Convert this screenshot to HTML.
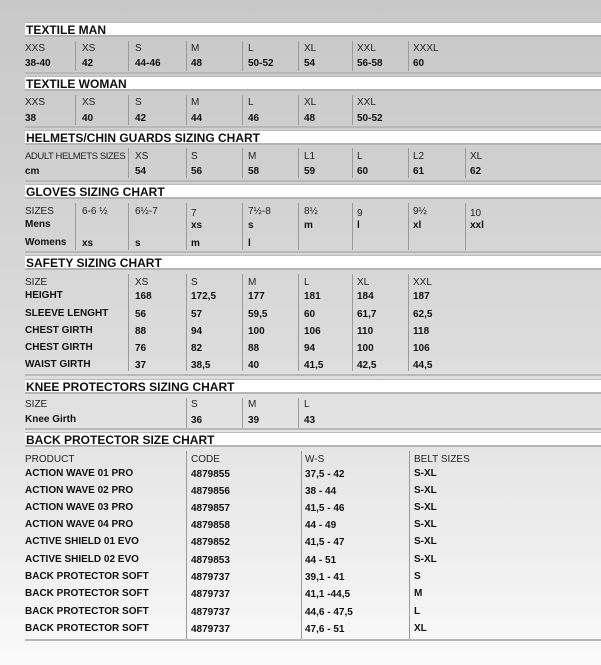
<!DOCTYPE html>
<html><head><meta charset="utf-8"><style>
*{margin:0;padding:0;box-sizing:border-box}
body{width:601px;height:665px;overflow:hidden;position:relative;font-family:"Liberation Sans",sans-serif;color:#1a1a1a;
background:linear-gradient(#c8c8c8 0px,#cfcfcf 150px,#dcdcdc 350px,#eeeeee 550px,#fafafa 665px)}
.h{position:absolute;left:25px;right:0;height:15px;background:#fff;border-top:1px solid #bbb;border-bottom:2px solid #b5b5b5;font-weight:bold;font-size:12px;line-height:14px;padding-left:1px;color:#111}
.t{position:absolute;font-size:10px;line-height:11px;white-space:nowrap;color:#222}
.b{font-weight:bold;color:#111}
.v{position:absolute;width:1px;background:#9a9a9a}
.l{position:absolute;left:25px;right:0;height:2px;background:#b8b8b8}
</style></head><body>

<!-- TEXTILE MAN -->
<div class="h" style="top:22px">TEXTILE MAN</div>
<div class="v" style="left:75px;top:41px;height:30px"></div><div class="v" style="left:128px;top:41px;height:30px"></div><div class="v" style="left:186px;top:41px;height:30px"></div><div class="v" style="left:242px;top:41px;height:30px"></div><div class="v" style="left:298px;top:41px;height:30px"></div><div class="v" style="left:352px;top:41px;height:30px"></div><div class="v" style="left:408px;top:41px;height:30px"></div>
<div class="t" style="top:43px;left:25px">XXS</div><div class="t" style="top:43px;left:82px">XS</div><div class="t" style="top:43px;left:135px">S</div><div class="t" style="top:43px;left:191px">M</div><div class="t" style="top:43px;left:248px">L</div><div class="t" style="top:43px;left:304px">XL</div><div class="t" style="top:43px;left:357px">XXL</div><div class="t" style="top:43px;left:413px">XXXL</div>
<div class="t b" style="top:58px;left:25px">38-40</div><div class="t b" style="top:58px;left:82px">42</div><div class="t b" style="top:58px;left:135px">44-46</div><div class="t b" style="top:58px;left:191px">48</div><div class="t b" style="top:58px;left:248px">50-52</div><div class="t b" style="top:58px;left:304px">54</div><div class="t b" style="top:58px;left:357px">56-58</div><div class="t b" style="top:58px;left:413px">60</div>
<div class="l" style="top:72px"></div>

<!-- TEXTILE WOMAN -->
<div class="h" style="top:76px">TEXTILE WOMAN</div>
<div class="v" style="left:75px;top:95px;height:30px"></div><div class="v" style="left:128px;top:95px;height:30px"></div><div class="v" style="left:186px;top:95px;height:30px"></div><div class="v" style="left:242px;top:95px;height:30px"></div><div class="v" style="left:298px;top:95px;height:30px"></div><div class="v" style="left:352px;top:95px;height:30px"></div>
<div class="t" style="top:97px;left:25px">XXS</div><div class="t" style="top:97px;left:82px">XS</div><div class="t" style="top:97px;left:135px">S</div><div class="t" style="top:97px;left:191px">M</div><div class="t" style="top:97px;left:248px">L</div><div class="t" style="top:97px;left:304px">XL</div><div class="t" style="top:97px;left:357px">XXL</div>
<div class="t b" style="top:113px;left:25px">38</div><div class="t b" style="top:113px;left:82px">40</div><div class="t b" style="top:113px;left:135px">42</div><div class="t b" style="top:113px;left:191px">44</div><div class="t b" style="top:113px;left:248px">46</div><div class="t b" style="top:113px;left:304px">48</div><div class="t b" style="top:113px;left:357px">50-52</div>
<div class="l" style="top:126px"></div>

<!-- HELMETS -->
<div class="h" style="top:130px">HELMETS/CHIN GUARDS SIZING CHART</div>
<div class="v" style="left:128px;top:148px;height:30px"></div><div class="v" style="left:186px;top:148px;height:30px"></div><div class="v" style="left:242px;top:148px;height:30px"></div><div class="v" style="left:298px;top:148px;height:30px"></div><div class="v" style="left:352px;top:148px;height:30px"></div><div class="v" style="left:408px;top:148px;height:30px"></div><div class="v" style="left:465px;top:148px;height:30px"></div>
<div class="t" style="top:151px;left:25px;font-size:9.5px;letter-spacing:-0.4px">ADULT HELMETS SIZES</div><div class="t" style="top:151px;left:135px">XS</div><div class="t" style="top:151px;left:191px">S</div><div class="t" style="top:151px;left:248px">M</div><div class="t" style="top:151px;left:304px">L1</div><div class="t" style="top:151px;left:357px">L</div><div class="t" style="top:151px;left:413px">L2</div><div class="t" style="top:151px;left:470px">XL</div>
<div class="t b" style="top:166px;left:25px">cm</div><div class="t b" style="top:166px;left:135px">54</div><div class="t b" style="top:166px;left:191px">56</div><div class="t b" style="top:166px;left:248px">58</div><div class="t b" style="top:166px;left:304px">59</div><div class="t b" style="top:166px;left:357px">60</div><div class="t b" style="top:166px;left:413px">61</div><div class="t b" style="top:166px;left:470px">62</div>
<div class="l" style="top:180px"></div>

<!-- GLOVES -->
<div class="h" style="top:184px">GLOVES SIZING CHART</div>
<div class="v" style="left:75px;top:203px;height:47px"></div><div class="v" style="left:128px;top:203px;height:47px"></div><div class="v" style="left:186px;top:203px;height:47px"></div><div class="v" style="left:242px;top:203px;height:47px"></div><div class="v" style="left:298px;top:203px;height:47px"></div><div class="v" style="left:352px;top:203px;height:47px"></div><div class="v" style="left:408px;top:203px;height:47px"></div><div class="v" style="left:465px;top:203px;height:47px"></div>
<div class="t" style="top:206px;left:25px">SIZES</div><div class="t" style="top:206px;left:82px">6-6 ½</div><div class="t" style="top:206px;left:135px">6½-7</div><div class="t" style="top:208px;left:191px">7</div><div class="t" style="top:206px;left:248px">7½-8</div><div class="t" style="top:206px;left:304px">8½</div><div class="t" style="top:208px;left:357px">9</div><div class="t" style="top:206px;left:413px">9½</div><div class="t" style="top:208px;left:470px">10</div>
<div class="t b" style="top:219px;left:25px">Mens</div><div class="t b" style="top:220px;left:191px">xs</div><div class="t b" style="top:220px;left:248px">s</div><div class="t b" style="top:220px;left:304px">m</div><div class="t b" style="top:220px;left:357px">l</div><div class="t b" style="top:220px;left:413px">xl</div><div class="t b" style="top:220px;left:470px">xxl</div>
<div class="t b" style="top:237px;left:25px">Womens</div><div class="t b" style="top:238px;left:82px">xs</div><div class="t b" style="top:238px;left:135px">s</div><div class="t b" style="top:238px;left:191px">m</div><div class="t b" style="top:238px;left:248px">l</div>
<div class="l" style="top:251px"></div>

<!-- SAFETY -->
<div class="h" style="top:255px">SAFETY SIZING CHART</div>
<div class="v" style="left:128px;top:274px;height:97px"></div><div class="v" style="left:186px;top:274px;height:97px"></div><div class="v" style="left:242px;top:274px;height:97px"></div><div class="v" style="left:298px;top:274px;height:97px"></div><div class="v" style="left:352px;top:274px;height:97px"></div><div class="v" style="left:408px;top:274px;height:97px"></div>
<div class="t" style="top:277px;left:25px">SIZE</div><div class="t" style="top:277px;left:135px">XS</div><div class="t" style="top:277px;left:191px">S</div><div class="t" style="top:277px;left:248px">M</div><div class="t" style="top:277px;left:304px">L</div><div class="t" style="top:277px;left:357px">XL</div><div class="t" style="top:277px;left:413px">XXL</div>
<div class="t b" style="top:290px;left:25px">HEIGHT</div><div class="t b" style="top:291px;left:135px">168</div><div class="t b" style="top:291px;left:191px">172,5</div><div class="t b" style="top:291px;left:248px">177</div><div class="t b" style="top:291px;left:304px">181</div><div class="t b" style="top:291px;left:357px">184</div><div class="t b" style="top:291px;left:413px">187</div>
<div class="t b" style="top:308px;left:25px">SLEEVE LENGHT</div><div class="t b" style="top:309px;left:135px">56</div><div class="t b" style="top:309px;left:191px">57</div><div class="t b" style="top:309px;left:248px">59,5</div><div class="t b" style="top:309px;left:304px">60</div><div class="t b" style="top:309px;left:357px">61,7</div><div class="t b" style="top:309px;left:413px">62,5</div>
<div class="t b" style="top:325px;left:25px">CHEST GIRTH</div><div class="t b" style="top:326px;left:135px">88</div><div class="t b" style="top:326px;left:191px">94</div><div class="t b" style="top:326px;left:248px">100</div><div class="t b" style="top:326px;left:304px">106</div><div class="t b" style="top:326px;left:357px">110</div><div class="t b" style="top:326px;left:413px">118</div>
<div class="t b" style="top:342px;left:25px">CHEST GIRTH</div><div class="t b" style="top:343px;left:135px">76</div><div class="t b" style="top:343px;left:191px">82</div><div class="t b" style="top:343px;left:248px">88</div><div class="t b" style="top:343px;left:304px">94</div><div class="t b" style="top:343px;left:357px">100</div><div class="t b" style="top:343px;left:413px">106</div>
<div class="t b" style="top:359px;left:25px">WAIST GIRTH</div><div class="t b" style="top:360px;left:135px">37</div><div class="t b" style="top:360px;left:191px">38,5</div><div class="t b" style="top:360px;left:248px">40</div><div class="t b" style="top:360px;left:304px">41,5</div><div class="t b" style="top:360px;left:357px">42,5</div><div class="t b" style="top:360px;left:413px">44,5</div>
<div class="l" style="top:374px"></div>

<!-- KNEE -->
<div class="h" style="top:379px">KNEE PROTECTORS SIZING CHART</div>
<div class="v" style="left:186px;top:398px;height:30px"></div><div class="v" style="left:242px;top:398px;height:30px"></div><div class="v" style="left:298px;top:398px;height:30px"></div>
<div class="t" style="top:399px;left:25px">SIZE</div><div class="t" style="top:399px;left:191px">S</div><div class="t" style="top:399px;left:248px">M</div><div class="t" style="top:399px;left:304px">L</div>
<div class="t b" style="top:414px;left:25px">Knee Girth</div><div class="t b" style="top:415px;left:191px">36</div><div class="t b" style="top:415px;left:248px">39</div><div class="t b" style="top:415px;left:304px">43</div>
<div class="l" style="top:428px"></div>

<!-- BACK -->
<div class="h" style="top:432px">BACK PROTECTOR SIZE CHART</div>
<div class="v" style="left:186px;top:451px;height:188px"></div><div class="v" style="left:301px;top:451px;height:188px"></div><div class="v" style="left:409px;top:451px;height:188px"></div>
<div class="t" style="top:454px;left:25px">PRODUCT</div><div class="t" style="top:454px;left:191px">CODE</div><div class="t" style="top:454px;left:305px">W-S</div><div class="t" style="top:454px;left:414px">BELT SIZES</div>
<div class="t b" style="top:468px;left:25px">ACTION WAVE 01 PRO</div><div class="t b" style="top:469px;left:191px">4879855</div><div class="t b" style="top:469px;left:305px">37,5 - 42</div><div class="t b" style="top:468px;left:414px">S-XL</div>
<div class="t b" style="top:485px;left:25px">ACTION WAVE 02 PRO</div><div class="t b" style="top:486px;left:191px">4879856</div><div class="t b" style="top:486px;left:305px">38 - 44</div><div class="t b" style="top:485px;left:414px">S-XL</div>
<div class="t b" style="top:502px;left:25px">ACTION WAVE 03 PRO</div><div class="t b" style="top:503px;left:191px">4879857</div><div class="t b" style="top:503px;left:305px">41,5 - 46</div><div class="t b" style="top:502px;left:414px">S-XL</div>
<div class="t b" style="top:519px;left:25px">ACTION WAVE 04 PRO</div><div class="t b" style="top:520px;left:191px">4879858</div><div class="t b" style="top:520px;left:305px">44 - 49</div><div class="t b" style="top:519px;left:414px">S-XL</div>
<div class="t b" style="top:536px;left:25px">ACTIVE SHIELD 01 EVO</div><div class="t b" style="top:537px;left:191px">4879852</div><div class="t b" style="top:537px;left:305px">41,5 - 47</div><div class="t b" style="top:536px;left:414px">S-XL</div>
<div class="t b" style="top:554px;left:25px">ACTIVE SHIELD 02 EVO</div><div class="t b" style="top:555px;left:191px">4879853</div><div class="t b" style="top:555px;left:305px">44 - 51</div><div class="t b" style="top:554px;left:414px">S-XL</div>
<div class="t b" style="top:571px;left:25px">BACK PROTECTOR SOFT</div><div class="t b" style="top:572px;left:191px">4879737</div><div class="t b" style="top:572px;left:305px">39,1 - 41</div><div class="t b" style="top:571px;left:414px">S</div>
<div class="t b" style="top:588px;left:25px">BACK PROTECTOR SOFT</div><div class="t b" style="top:589px;left:191px">4879737</div><div class="t b" style="top:589px;left:305px">41,1 -44,5</div><div class="t b" style="top:588px;left:414px">M</div>
<div class="t b" style="top:606px;left:25px">BACK PROTECTOR SOFT</div><div class="t b" style="top:607px;left:191px">4879737</div><div class="t b" style="top:607px;left:305px">44,6 - 47,5</div><div class="t b" style="top:606px;left:414px">L</div>
<div class="t b" style="top:623px;left:25px">BACK PROTECTOR SOFT</div><div class="t b" style="top:624px;left:191px">4879737</div><div class="t b" style="top:624px;left:305px">47,6 - 51</div><div class="t b" style="top:623px;left:414px">XL</div>
<div class="l" style="top:639px"></div>
</body></html>
